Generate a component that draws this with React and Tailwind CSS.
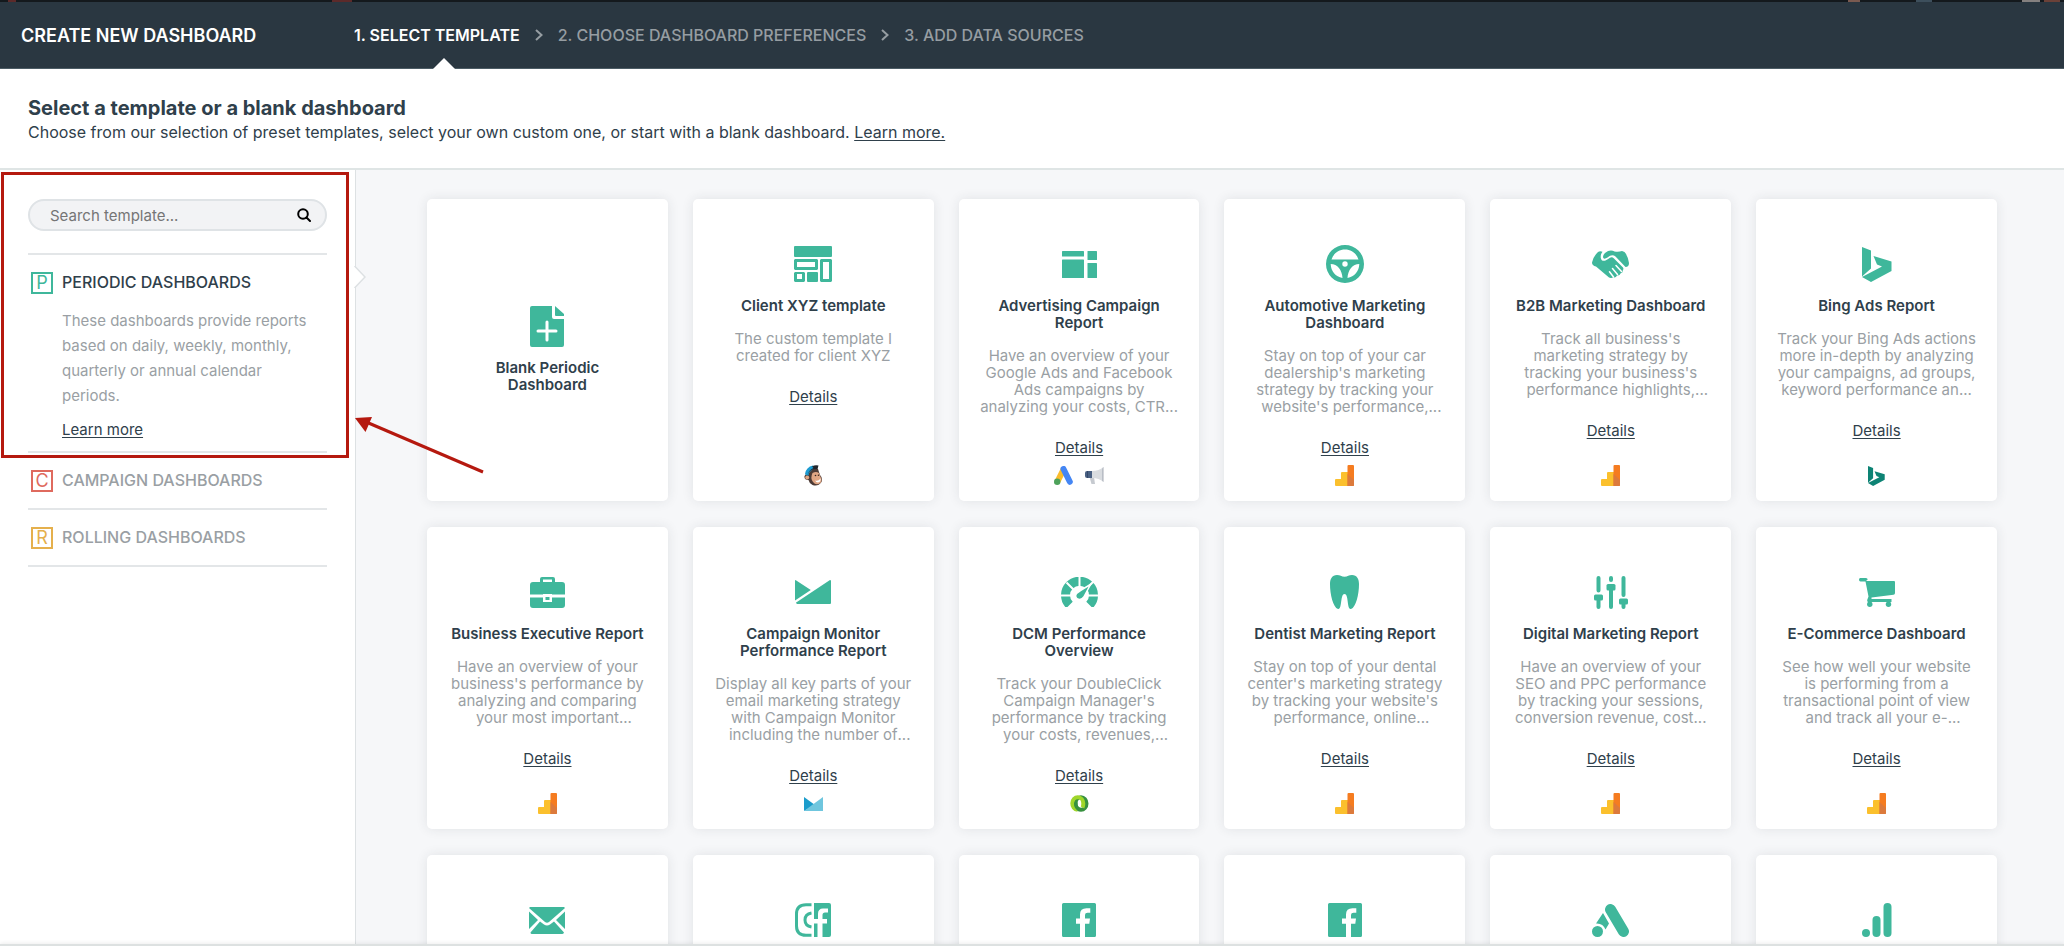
const PATHS = {
  file: {
    w: 34,
    h: 41,
    body: (
      <>
        <path d="M2 0H22V11Q22 13 24 13H34V39Q34 41 32 41H2Q0 41 0 39V2Q0 0 2 0Z" />
        <path d="M25 0L34 8V10H26Q25 10 25 9Z" />
        <path d="M17 16V34M8 25H26" stroke="#fff" strokeWidth="3" strokeLinecap="round" />
      </>
    ),
  },
  template: {
    w: 38,
    h: 36,
    body: (
      <>
        <rect width="38" height="11" rx="1" />
        <path
          fillRule="evenodd"
          d="M1 13H23L24 14V23L23 24H1L0 23V14ZM3 16V21H21V16ZM1 26H10L11 27V35L10 36H1L0 35V27ZM3 28V33H8V28ZM27 13H37L38 14V35L37 36H27L26 35V14ZM29 16V33H35V16Z"
        />
        <rect x="13" y="26" width="11" height="10" rx="1" />
      </>
    ),
  },
  columns: {
    w: 35,
    h: 27,
    body: (
      <>
        <rect width="22" height="5.5" rx="0.6" />
        <rect y="8.5" width="22" height="18.5" rx="0.6" />
        <rect x="25.5" width="9.5" height="9" rx="0.6" />
        <rect x="25.5" y="12" width="9.5" height="15" rx="0.6" />
      </>
    ),
  },
  wheel: {
    w: 38,
    h: 38,
    body: (
      <path
        fillRule="evenodd"
        d="M19 0A19 19 0 1 1 19 38A19 19 0 1 1 19 0ZM5.5 14.5H32.5C30.5 8.5 25.5 4.5 19 4.5S7.5 8.5 5.5 14.5ZM4.7 19C5 26.5 9.5 31.5 16.5 33C16 25 11.5 19 4.7 19ZM33.3 19C33 26.5 28.5 31.5 21.5 33C22 25 26.5 19 33.3 19ZM19 16.3A2.7 2.7 0 1 0 19 21.7A2.7 2.7 0 1 0 19 16.3Z"
      />
    ),
  },
  handshake: {
    w: 37,
    h: 28,
    body: (
      <>
        <path d="M6 2Q8 0.8 10.5 1.8Q8.3 4.5 8.8 8Q9.5 11.5 13 10.7Q16 9.5 18 7.8Q20 6.6 22 8.5L31 17.5Q32 19 30.8 20.3Q31 22.5 28.7 23.3Q27.8 25.8 25 25.5Q24 27.8 21.5 27.3Q19 28.6 17 27.5L4 16.5Q0 15.5 0 12.5Q1.5 6 6 2Z" />
        <path d="M13 3Q18 -1 22.5 1.5Q26.5 2.3 30 1L32.5 2Q36 6 37 13Q37 17 33.5 17L23.5 6.5Q20 3.8 15.5 7.5Q12.5 9.5 11.3 8Q10.3 6 13 3Z" />
        <path
          d="M29.5 21.5L24 15.5M25.5 24.5L20.5 18.5M21.5 27L17.5 21.8"
          stroke="#fff"
          strokeWidth="1.5"
          strokeLinecap="round"
        />
      </>
    ),
  },
  bing: {
    w: 30,
    h: 35,
    body: <path d="M0 0L9 3.5V21.5L0 29.5ZM11.5 9L29.5 14.5V24L9 35L0 30L20 19.5L15 17.5Z" />,
  },
  briefcase: {
    w: 35,
    h: 31,
    body: (
      <path
        fillRule="evenodd"
        d="M12 0H23Q25 0 25 2V5H32Q35 5 35 8V17.5H22V17H13V17.5H0V8Q0 5 3 5H10V2Q10 0 12 0ZM13 2.5V5H22V2.5ZM0 20.5H13V25H22V20.5H35V28Q35 31 32 31H3Q0 31 0 28ZM15.5 20H19.5V23H15.5Z"
      />
    ),
  },
  monitor: {
    w: 36,
    h: 24,
    body: <path d="M0.5 0L15.8 10L0 20.5V0.5ZM36 0.5V23Q36 24 35 24H2L0.8 22.8L35 0Z" />,
  },
  gauge: {
    w: 37,
    h: 30,
    body: (
      <>
        <path d="M8.5 28A14 14 0 1 1 28.5 28" fill="none" stroke="#3fb79b" strokeWidth="9" />
        <path d="M0 18.5H11M26 18.5H37M18.5 0V10M5.5 5.5L13 13M24 13L34 3" stroke="#fff" strokeWidth="2" />
        <path
          d="M29.5 7.5L22.8 20Q20.5 23.5 16.5 22Q13.3 19.5 15.5 16.5Q17 14.7 29.5 7.5Z"
          stroke="#fff"
          strokeWidth="1.5"
        />
      </>
    ),
  },
  tooth: {
    w: 29,
    h: 34,
    body: (
      <path d="M7 0C10 0 11.5 1.7 14.5 1.7S19 0 22 0C27 0 29 4 29 9C29 19 26 32.5 21 34C16.5 34.5 19 19 14.5 19S12.5 34.5 8 34C3 32.5 0 19 0 9C0 4 2 0 7 0Z" />
    ),
  },
  sliders: {
    w: 34,
    h: 33,
    body: (
      <>
        <path
          d="M4.5 2V14.5M4.5 22V31M17 2V4M17 11V31M29.5 2V19M29.5 27V31"
          stroke="#3fb79b"
          strokeWidth="4"
          strokeLinecap="round"
        />
        <rect y="18.5" width="9" height="6" rx="1.5" />
        <rect x="12.5" y="8" width="9" height="6.5" rx="1.5" />
        <rect x="25" y="22.5" width="9" height="6" rx="1.5" />
      </>
    ),
  },
  cart: {
    w: 36,
    h: 29,
    body: (
      <>
        <path d="M7 3H35Q36 3 36 4V15Q36 16.5 34.5 16.7L12.5 19.5V21H32.5V24H9.5Q8 24 8.2 22L9.5 18.5L6.5 3.5H1.5Q0 3.5 0 1.7T1.5 0H7Q8.5 0 8.7 1.5Z" />
        <circle cx="10.8" cy="26.3" r="2.7" />
        <circle cx="29.5" cy="26.3" r="2.7" />
      </>
    ),
  },
  envelope: {
    w: 36,
    h: 27,
    body: (
      <path d="M1 0H35L36 1L20 15Q18 16.5 16 15L0 1ZM0 4.5L9 13L0 22ZM36 4.5V22L27 13ZM11 14.5L15 17.5Q18 19.5 21 17.5L25 14.5L35 25.5Q34.5 27 33 27H3Q1.5 27 1.5 25.5Z" />
    ),
  },
  instaFace: {
    w: 36,
    h: 34,
    body: (
      <>
        <path
          d="M16.5 1.7H11Q1.5 1.7 1.5 11V23Q1.5 32.3 11 32.3H16.5M16.5 10Q10 11 10 17T16.5 24"
          fill="none"
          stroke="#3fb79b"
          strokeWidth="3"
        />
        <path d="M19 0H34Q36 0 36 2V32Q36 34 34 34H27.5V20.5H32V16H27.5V12Q27.5 9.5 30 9.5H33V5.5H28Q23 5.5 23 11V16H19Z" />
        <path d="M19 20.5H22.5V34H19Z" />
      </>
    ),
  },
  facebook: {
    w: 34,
    h: 34,
    body: (
      <path d="M1.5 0H32.5Q34 0 34 1.5V32.5Q34 34 32.5 34H23V20.8H27.3L28 15.5H23V12Q23 9.8 25.5 9.8H28.3V5.3H24.5Q18 5.3 18 11.5V15.5H14V20.8H18V34H1.5Q0 34 0 32.5V1.5Q0 0 1.5 0Z" />
    ),
  },
  ads: {
    w: 37,
    h: 33,
    body: (
      <>
        <path d="M18.5 5.5L31.5 27.5" stroke="#3fb79b" strokeWidth="11" strokeLinecap="round" />
        <path d="M11 9L17 19.5L13.5 25.5Q11 19 4 19.5Z" />
        <circle cx="5.5" cy="27.5" r="5.5" />
      </>
    ),
  },
  analytics: {
    w: 30,
    h: 34,
    body: (
      <>
        <circle cx="4" cy="30" r="4" />
        <rect x="10.5" y="13" width="8" height="21" rx="4" />
        <rect x="21.5" width="8" height="34" rx="4" />
      </>
    ),
  },
};

function TemplateIcon({ name }) {
  const icon = PATHS[name];
  return (
    <svg width={icon.w} height={icon.h} viewBox={`0 0 ${icon.w} ${icon.h}`} fill="#3fb79b" aria-hidden="true">
      {icon.body}
    </svg>
  );
}

function SourceLogo({ name }) {
  switch (name) {
    case "analytics":
      return (
        <svg width="19" height="21" viewBox="0 0 19 21" aria-hidden="true">
          <path d="M1 14H6V8Q6 7 7 7H13V21H1Q0 21 0 20V15Q0 14 1 14Z" fill="#fbc02d" />
          <path d="M13.5 0H18Q19 0 19 1V20Q19 21 18 21H12.5V1Q12.5 0 13.5 0Z" fill="#f57c20" />
          <path d="M12.5 9L19 15V20Q19 21 18 21H12.5Z" fill="#dc7a3c" />
        </svg>
      );
    case "ads":
      return (
        <svg width="19" height="19" viewBox="0 0 19 19" aria-hidden="true">
          <path d="M9.5 3.5L3.5 15.5" stroke="#fbbc2c" strokeWidth="6" />
          <path d="M9.5 3L15.8 15.8" stroke="#4486f4" strokeWidth="6" strokeLinecap="round" />
          <circle cx="3.2" cy="15.8" r="3.2" fill="#4ea25b" />
        </svg>
      );
    case "megaphone":
      return (
        <svg width="19" height="19" viewBox="0 0 19 19" aria-hidden="true">
          <path d="M4.5 11H9L10 18H6.5Z" fill="#c6cad0" />
          <path d="M7 5Q14 5 18.5 1V16Q14 12 7 12Z" fill="#d9dce0" />
          <path d="M17 2.5L18.5 1V16L17 14.8Z" fill="#b9bec6" />
          <path d="M2 5H7V12H2Q0 12 0 10V7Q0 5 2 5Z" fill="#4a6183" />
          <path d="M2.5 5V12" stroke="#34486a" />
        </svg>
      );
    case "bing":
      return (
        <svg width="17" height="20" viewBox="0 0 30 35" fill="#0d8374" aria-hidden="true">
          {PATHS.bing.body}
        </svg>
      );
    case "monitor":
      return (
        <svg width="19" height="14" viewBox="0 0 19 14" aria-hidden="true">
          <path d="M0 0L11 8L0 14Z" fill="#1b9ccb" />
          <path d="M19 0V14H0Z" fill="#6fc6de" />
        </svg>
      );
    case "doubleclick":
      return (
        <svg width="19" height="17" viewBox="0 0 19 17" fill="none" aria-hidden="true">
          <ellipse cx="11" cy="8.5" rx="5.5" ry="6.3" stroke="#37913f" strokeWidth="4" />
          <path d="M7.5 14.8A5.5 6.3 0 1 1 13.3 8.5Q13.3 11 12.5 12.5" stroke="#9fd62b" strokeWidth="4" />
          <path d="M5.7 7.5Q5.5 13.5 10 14.5" stroke="#37913f" strokeWidth="3.5" />
        </svg>
      );
    case "mailchimp":
      return (
        <svg width="19" height="21" viewBox="0 0 19 21" aria-hidden="true">
          <path d="M5 5Q9 1 14 4L16 10Q19 13 17.5 17Q14 22 8.5 20Q5 18 4.5 15Q0 15 0.5 11Z" fill="#4c3a35" />
          <path d="M8.5 8Q12 6 15 8L16.5 12Q18.5 15 16.5 18Q12 21 9 17Q6 13 8.5 8Z" fill="#dfa583" />
          <circle cx="3.2" cy="12.5" r="2" fill="#dfa583" />
          <path d="M1 9Q2 2 9 0.5L11 3Q5 6 4.5 10.5Q2.5 11 1 9Z" fill="#1c9bd1" />
          <path d="M3.5 10.5Q5 5 10 4L13.5 4L14.5 0.5Q11 -0.5 8 1.5L9.500 3Q4.500 5 3.500 10.500Z" fill="#22262d" />
          <path d="M11 15.5Q14.5 16.5 16.5 13.5Q17 17 14 17.5Q12 17.5 11 15.5Z" fill="#fff" />
          <circle cx="11.5" cy="10.5" r="0.8" fill="#33251f" />
          <circle cx="14.5" cy="10.3" r="0.8" fill="#33251f" />
        </svg>
      );
    default:
      return null;
  }
}

// `hang` keeps the last line centred without its ellipsis
const templates = [
  { icon: "file", title: ["Blank Periodic", "Dashboard"], blank: true },
  {
    icon: "template",
    title: ["Client XYZ template"],
    lines: ["The custom template I", "created for client XYZ"],
    sources: ["mailchimp"],
  },
  {
    icon: "columns",
    title: ["Advertising Campaign", "Report"],
    lines: ["Have an overview of your", "Google Ads and Facebook", "Ads campaigns by", "analyzing your costs, CTR..."],
    sources: ["ads", "megaphone"],
  },
  {
    icon: "wheel",
    title: ["Automotive Marketing", "Dashboard"],
    lines: ["Stay on top of your car", "dealership's marketing", "strategy by tracking your", "website's performance,"],
    hang: true,
    sources: ["analytics"],
  },
  {
    icon: "handshake",
    title: ["B2B Marketing Dashboard"],
    lines: ["Track all business's", "marketing strategy by", "tracking your business's", "performance highlights,"],
    hang: true,
    sources: ["analytics"],
  },
  {
    icon: "bing",
    title: ["Bing Ads Report"],
    lines: ["Track your Bing Ads actions", "more in-depth by analyzing", "your campaigns, ad groups,", "keyword performance an..."],
    sources: ["bing"],
  },
  {
    icon: "briefcase",
    title: ["Business Executive Report"],
    lines: ["Have an overview of your", "business's performance by", "analyzing and comparing", "your most important"],
    hang: true,
    sources: ["analytics"],
  },
  {
    icon: "monitor",
    title: ["Campaign Monitor", "Performance Report"],
    lines: ["Display all key parts of your", "email marketing strategy", "with Campaign Monitor", "including the number of"],
    hang: true,
    sources: ["monitor"],
  },
  {
    icon: "gauge",
    title: ["DCM Performance", "Overview"],
    lines: ["Track your DoubleClick", "Campaign Manager's", "performance by tracking", "your costs, revenues,"],
    hang: true,
    sources: ["doubleclick"],
  },
  {
    icon: "tooth",
    title: ["Dentist Marketing Report"],
    lines: ["Stay on top of your dental", "center's marketing strategy", "by tracking your website's", "performance, online"],
    hang: true,
    sources: ["analytics"],
  },
  {
    icon: "sliders",
    title: ["Digital Marketing Report"],
    lines: ["Have an overview of your", "SEO and PPC performance", "by tracking your sessions,", "conversion revenue, cost..."],
    sources: ["analytics"],
  },
  {
    icon: "cart",
    title: ["E-Commerce Dashboard"],
    lines: ["See how well your website", "is performing from a", "transactional point of view", "and track all your e-"],
    hang: true,
    sources: ["analytics"],
  },
  { icon: "envelope" },
  { icon: "instaFace" },
  { icon: "facebook" },
  { icon: "facebook" },
  { icon: "ads" },
  { icon: "analytics" },
];

function TemplateCard({ template }) {
  const { icon, title, lines, hang, sources, blank } = template;
  return (
    <article
      className={`flex h-[302px] flex-col items-center rounded-[5px] bg-white pb-[15px] text-center text-[15px] leading-[17px] whitespace-nowrap shadow-[0_0_12px_rgba(40,50,60,0.1)] ${
        blank ? "pt-[107px]" : "pt-[45px]"
      }`}
    >
      <div className="flex h-10 items-center justify-center">
        <TemplateIcon name={icon} />
      </div>
      {title && (
        <h2 className="mt-[13px] font-semibold text-[#2f404b]">
          {title.map((line) => (
            <span key={line} className="block">
              {line}
            </span>
          ))}
        </h2>
      )}
      {lines && (
        <>
          <p className="mt-4 text-[#9a9fa4]">
            {lines.map((line, i) => (
              <span key={line} className="block">
                {line}
                {hang && i === lines.length - 1 && <span className="inline-block w-0">...</span>}
              </span>
            ))}
          </p>
          <a href="#details" className="mt-6 text-[#2f404b] underline underline-offset-2">
            Details
          </a>
          <div className="mt-auto flex h-[21px] items-center justify-center gap-3">
            {sources.map((source) => (
              <SourceLogo key={source} name={source} />
            ))}
          </div>
        </>
      )}
    </article>
  );
}

function Chevron() {
  return (
    <svg width="8" height="12" viewBox="0 0 8 12" fill="none" stroke="#969da2" strokeWidth="2" aria-hidden="true">
      <path d="M1 1L6.5 6L1 11" />
    </svg>
  );
}

function Header() {
  return (
    <header className="flex h-[69px] shrink-0 flex-col border-b border-[#4c5c65] bg-[#2a3741]">
      {/* Sliver of the page behind the dialog */}
      <div className="flex h-[2px] shrink-0 bg-[#14191d]">
        <span className="ml-2 w-2 bg-[#5c2a2a]" />
        <span className="ml-[316px] w-5 bg-[#5c2a2a]" />
        <span className="ml-auto w-3 bg-[#7a5a50]" />
        <span className="ml-14 w-4 bg-[#3d4f5c]" />
        <span className="ml-[90px] w-[18px] bg-[#84807f]" />
        <span className="mr-1 ml-1 w-4 bg-[#6b4138]" />
      </div>
      <div className="flex flex-1 items-center pl-[21px]">
        <h1 className="w-[333px] text-[18px] font-semibold text-white">CREATE NEW DASHBOARD</h1>
        <ol className="flex h-full items-center gap-[15px] text-[16px] font-medium text-[#969da2]">
          <li className="relative flex h-full items-center font-semibold text-white">
            1. SELECT TEMPLATE
            <span className="absolute -bottom-px left-[79px] border-x-11 border-b-11 border-x-transparent border-b-white" />
          </li>
          <Chevron />
          <li>2. CHOOSE DASHBOARD PREFERENCES</li>
          <Chevron />
          <li>3. ADD DATA SOURCES</li>
        </ol>
      </div>
    </header>
  );
}

function Category({ letter, name, badge, active, children }) {
  return (
    <section className="border-b-2 border-[#e3e6e8] px-[3px] pt-[17px] pb-4">
      <button type="button" className="flex items-start gap-[9px]">
        <span className={`flex size-[22px] items-center justify-center border-2 text-[18px] leading-none ${badge}`}>
          {letter}
        </span>
        <span className={`text-[16px] leading-5 font-medium ${active ? "text-[#2f404b]" : "text-[#9a9fa4]"}`}>
          {name}
        </span>
      </button>
      {children}
    </section>
  );
}

function Sidebar() {
  return (
    <aside className="relative w-[356px] shrink-0 border-r border-[#dde1e3] bg-white px-7 pt-[29px]">
      <div className="relative mb-[22px]">
        <input
          type="text"
          aria-label="Search template"
          placeholder="Search template..."
          className="h-8 w-full rounded-full border-2 border-[#dfe3e6] bg-[#f2f3f5] pr-10 pl-5 text-[15px] placeholder:text-[#757575]"
        />
        <svg
          className="absolute top-[9px] right-4"
          width="14"
          height="14"
          viewBox="0 0 14 14"
          fill="none"
          stroke="#000"
          strokeWidth="2"
          aria-hidden="true"
        >
          <circle cx="6" cy="6" r="4.8" />
          <path d="M9.5 9.5L13 13" strokeLinecap="round" />
        </svg>
      </div>
      <div className="border-t-2 border-[#e3e6e8]">
        <Category letter="P" name="PERIODIC DASHBOARDS" badge="border-[#3fb79b] text-[#3fb79b]" active>
          <div className="mt-[14px] -mb-[7px] pl-[31px] text-[15px] leading-[25px]">
            <p className="whitespace-nowrap text-[#9a9fa4]">
              These dashboards provide reports
              <br />
              based on daily, weekly, monthly,
              <br />
              quarterly or annual calendar
              <br />
              periods.
            </p>
            <a href="#periodic" className="mt-[9px] block text-[#2f404b] underline underline-offset-2">
              Learn more
            </a>
          </div>
        </Category>
        <Category letter="C" name="CAMPAIGN DASHBOARDS" badge="border-[#df6a5e] text-[#df6a5e]" />
        <Category letter="R" name="ROLLING DASHBOARDS" badge="border-[#e5b04c] text-[#e5b04c]" />
      </div>

      {/* Pointer to the active category */}
      <svg className="absolute top-24 -right-[11px]" width="12" height="22" viewBox="0 0 12 22" aria-hidden="true">
        <path d="M0 0L11 11L0 22Z" fill="#fff" />
        <path d="M0.5 0L11 11L0.5 22" fill="none" stroke="#dde1e3" strokeWidth="1.5" />
      </svg>

      {/* Callout box and arrow */}
      <div className="pointer-events-none absolute top-[2px] left-px h-[286px] w-[348px] border-3 border-[#b5190f]" />
      <svg
        className="pointer-events-none absolute top-[246px] left-[355px] z-10"
        width="130"
        height="58"
        viewBox="0 0 130 58"
        aria-hidden="true"
      >
        <path d="M10 5.5L128 56" stroke="#b5190f" strokeWidth="3" />
        <path d="M0 2L17 1L10.5 16Z" fill="#b5190f" />
      </svg>
    </aside>
  );
}

export default function App() {
  return (
    <div className="flex h-screen flex-col overflow-hidden bg-white font-['Inter',sans-serif] text-[#2f404b]">
      <Header />
      <div className="h-[101px] shrink-0 border-b-2 border-[#dfe5e5] px-7 pt-[27px]">
        <h2 className="text-[20px] leading-6 font-bold">Select a template or a blank dashboard</h2>
        <p className="text-[16px] leading-6">
          Choose from our selection of preset templates, select your own custom one, or start with a blank dashboard.{" "}
          <a href="#learn" className="underline underline-offset-2">
            Learn more.
          </a>
        </p>
      </div>
      <div className="flex min-h-0 flex-1">
        <Sidebar />
        <main className="min-w-0 flex-1 overflow-hidden bg-[#f6f7f9] pt-[29px] pr-[67px] pl-[71px]">
          <div className="grid grid-cols-6 gap-x-[25px] gap-y-[26px]">
            {templates.map((template, i) => (
              <TemplateCard key={i} template={template} />
            ))}
          </div>
        </main>
      </div>
      <footer className="z-10 h-[2px] shrink-0 bg-[#dde1e1] shadow-[0_0_4px_rgba(0,0,0,0.15)]" />
    </div>
  );
}
